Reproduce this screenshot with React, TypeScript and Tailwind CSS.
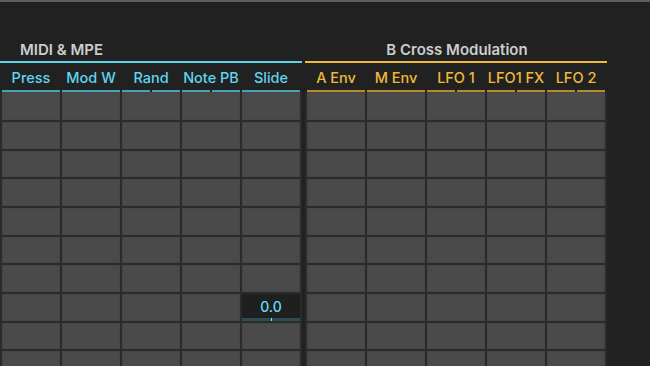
const font = { fontFamily: "Inter, 'Noto Sans', sans-serif" };

type Col = { label: string; split: boolean };

const midiCols: Col[] = [
  { label: "Press", split: false },
  { label: "Mod W", split: false },
  { label: "Rand", split: true },
  { label: "Note PB", split: true },
  { label: "Slide", split: false },
];

const crossCols: Col[] = [
  { label: "A Env", split: false },
  { label: "M Env", split: false },
  { label: "LFO 1", split: true },
  { label: "LFO1 FX", split: true },
  { label: "LFO 2", split: true },
];

// row heights, so the dark lines land where the screenshot has them
const rowHeights = ["h-[28px]", "h-[27px]", "h-[26px]", "h-[27px]", "h-[27px]", "h-[26px]", "h-[27px]", "h-[27px]", "h-[26px]", "h-[27px]"];

const Section = ({
  title,
  centered,
  cols,
  accent,
}: {
  title: string;
  centered: boolean;
  cols: Col[];
  accent: "cyan" | "orange";
}) => {
  const cyan = accent === "cyan";
  const sub = cyan ? "bg-[#45a5b3]" : "bg-[#b68c2f]";
  return (
    <div className="flex w-[302px] shrink-0 flex-col">
      {/* title */}
      <div
        className={
          "flex h-[59px] items-end text-[15px] font-semibold text-[#cdcdcd] " +
          (centered ? "justify-center pl-[2px]" : "pl-[20px]")
        }
      >
        {title}
      </div>
      <div className={"h-[2px] " + (cyan ? "bg-[#5fd3ea]" : "bg-[#f0b93a]")} />

      {/* column labels */}
      <div className="grid h-[27px] grid-cols-[repeat(5,58px)] gap-x-[2px] px-[2px] pt-[2px]">
        {cols.map((c) => (
          <div
            key={c.label}
            className={
              "flex items-center justify-center whitespace-nowrap text-[14.5px] font-medium " +
              (cyan ? "text-[#5dd6ef]" : "text-[#f2b937]")
            }
          >
            {c.label}
          </div>
        ))}
      </div>

      {/* under-label bars */}
      <div className="grid h-[2px] grid-cols-[repeat(5,58px)] gap-x-[2px] px-[2px]">
        {cols.map((c) =>
          c.split ? (
            <div key={c.label} className="flex gap-[2px]">
              <div className={"flex-1 " + sub} />
              <div className={"flex-1 " + sub} />
            </div>
          ) : (
            <div key={c.label} className={sub} />
          )
        )}
      </div>

      {/* cells */}
      <div className="flex flex-col gap-y-[2px] bg-[#2b2b2b] px-[2px]">
        {rowHeights.map((h, row) => (
          <div key={row} className="grid grid-cols-[repeat(5,58px)] gap-x-[2px]">
            {[0, 1, 2, 3, 4].map((col) =>
              cyan && row === 7 && col === 4 ? (
                <div key={col} className={"flex flex-col bg-[#1f1f1f] " + h}>
                  <div className="flex flex-1 items-center justify-center pt-[1px] text-[14px] font-medium text-[#66dcf2]">
                    0.0
                  </div>
                  <div className="flex h-[3px] justify-center bg-[#2c4d53]">
                    <div className="w-[1px] bg-[#7fe6f5]" />
                  </div>
                </div>
              ) : (
                <div key={col} className={"bg-[#4a4a4a] shadow-[inset_0_0_0_1px_#464646] " + h} />
              )
            )}
          </div>
        ))}
      </div>
    </div>
  );
};

export default function App() {
  return (
    <div className="h-[366px] w-[650px] overflow-hidden bg-[#212121]" style={font}>
      <div className="h-[2px] bg-[#5e5e5e]" />
      <div className="flex gap-[3px]">
        <Section title="MIDI & MPE" centered={false} cols={midiCols} accent="cyan" />
        <Section title="B Cross Modulation" centered cols={crossCols} accent="orange" />
      </div>
    </div>
  );
}
